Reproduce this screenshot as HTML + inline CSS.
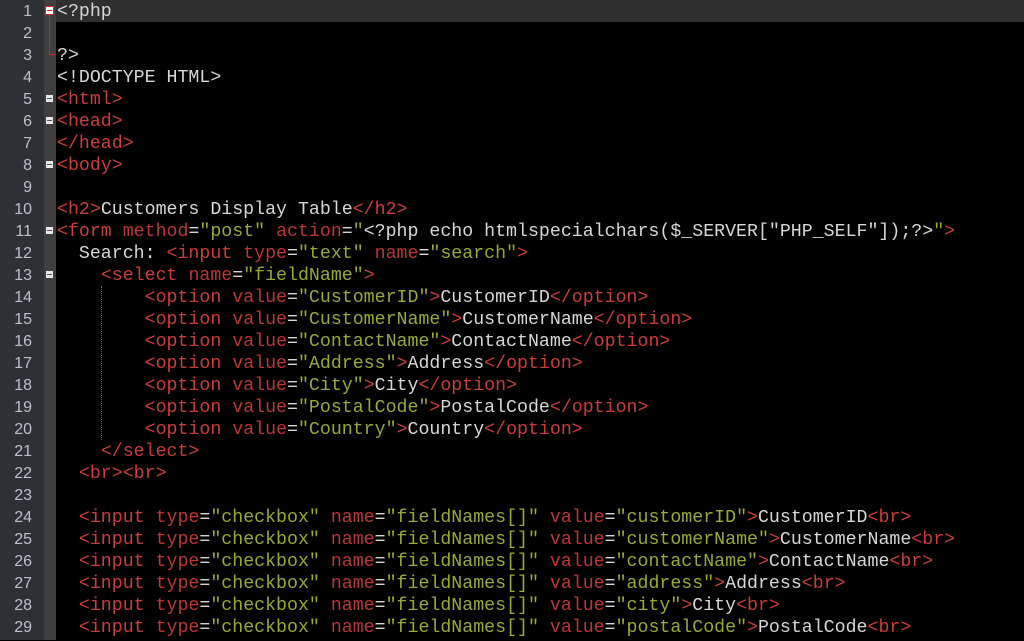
<!DOCTYPE html>
<html><head><meta charset="utf-8"><style>
html,body{margin:0;padding:0;width:1024px;height:640px;overflow:hidden;background:#000;}
#g{position:absolute;left:0;top:0;width:44px;height:640px;background:#2d3134;}
#f{position:absolute;left:44px;top:0;width:12px;height:640px;background-color:#3a3a3a;
background-image:linear-gradient(45deg,#444 25%,transparent 25%,transparent 75%,#444 75%),linear-gradient(45deg,#444 25%,transparent 25%,transparent 75%,#444 75%);
background-size:2px 2px;background-position:0 0,1px 1px;}
#hl{position:absolute;left:56px;top:0;width:968px;height:22px;background:#2f2f2f;}
.ln{position:absolute;left:0;width:32px;text-align:right;font:16px "Liberation Sans",sans-serif;color:#b8c2c8;height:22px;line-height:24px;}
.c{position:absolute;left:57px;height:22px;line-height:25px;font-family:"Liberation Mono",monospace;font-size:18.25px;color:#d6d6d6;white-space:pre;}
.t{color:#c83c3c}.a{color:#bb3535}.s{color:#98a834}.e{color:#d6d6d6}
.fb{position:absolute;left:46px;width:7px;height:7px;background:#e8e8e8;}
.fb:after{content:"";position:absolute;left:1px;top:3px;width:5px;height:1px;background:#555;}
.r{position:absolute;background:#e02020;z-index:5}
</style></head><body>
<div id="g"></div><div id="f"></div><div id="hl"></div>
<div style="position:absolute;z-index:6;left:45px;top:6px;width:9px;height:9px;border:1px solid #e02020;background:#fff;box-sizing:border-box"></div>
<div class="r" style="left:47px;top:10px;width:5px;height:1px;z-index:7"></div>
<div class="r" style="left:49px;top:15px;width:1px;height:40px"></div>
<div class="r" style="left:49px;top:54px;width:6px;height:1px"></div>
<div class="fb" style="top:95px"></div>
<div class="fb" style="top:117px"></div>
<div class="fb" style="top:161px"></div>
<div class="fb" style="top:227px"></div>
<div class="fb" style="top:271px"></div>
<div style="position:absolute;left:101px;top:286px;height:154px;border-left:1px dotted #666"></div>
<div class="ln" style="top:0">1</div><div class="ln" style="top:22px">2</div><div class="ln" style="top:44px">3</div><div class="ln" style="top:66px">4</div><div class="ln" style="top:88px">5</div><div class="ln" style="top:110px">6</div><div class="ln" style="top:132px">7</div><div class="ln" style="top:154px">8</div><div class="ln" style="top:176px">9</div><div class="ln" style="top:198px">10</div><div class="ln" style="top:220px">11</div><div class="ln" style="top:242px">12</div><div class="ln" style="top:264px">13</div><div class="ln" style="top:286px">14</div><div class="ln" style="top:308px">15</div><div class="ln" style="top:330px">16</div><div class="ln" style="top:352px">17</div><div class="ln" style="top:374px">18</div><div class="ln" style="top:396px">19</div><div class="ln" style="top:418px">20</div><div class="ln" style="top:440px">21</div><div class="ln" style="top:462px">22</div><div class="ln" style="top:484px">23</div><div class="ln" style="top:506px">24</div><div class="ln" style="top:528px">25</div><div class="ln" style="top:550px">26</div><div class="ln" style="top:572px">27</div><div class="ln" style="top:594px">28</div><div class="ln" style="top:616px">29</div>
<div class="c" style="top:0">&lt;?php</div>
<div class="c" style="top:44px">?&gt;</div>
<div class="c" style="top:66px">&lt;!DOCTYPE HTML&gt;</div>
<div class="c t" style="top:88px">&lt;html&gt;</div>
<div class="c t" style="top:110px">&lt;head&gt;</div>
<div class="c t" style="top:132px">&lt;/head&gt;</div>
<div class="c t" style="top:154px">&lt;body&gt;</div>
<div class="c" style="top:198px"><span class="t">&lt;h2&gt;</span>Customers Display Table<span class="t">&lt;/h2&gt;</span></div>
<div class="c" style="top:220px"><span class="t">&lt;form </span><span class="a">method</span>=<span class="s">"post"</span> <span class="a">action</span>=<span class="s">"</span>&lt;?php echo htmlspecialchars($_SERVER["PHP_SELF"]);?&gt;<span class="s">"</span><span class="t">&gt;</span></div>
<div class="c" style="top:242px">  Search: <span class="t">&lt;input </span><span class="a">type</span>=<span class="s">"text"</span> <span class="a">name</span>=<span class="s">"search"</span><span class="t">&gt;</span></div>
<div class="c" style="top:264px">    <span class="t">&lt;select </span><span class="a">name</span>=<span class="s">"fieldName"</span><span class="t">&gt;</span></div>
<div class="c" style="top:286px">        <span class="t">&lt;option </span><span class="a">value</span>=<span class="s">"CustomerID"</span><span class="t">&gt;</span>CustomerID<span class="t">&lt;/option&gt;</span></div>
<div class="c" style="top:308px">        <span class="t">&lt;option </span><span class="a">value</span>=<span class="s">"CustomerName"</span><span class="t">&gt;</span>CustomerName<span class="t">&lt;/option&gt;</span></div>
<div class="c" style="top:330px">        <span class="t">&lt;option </span><span class="a">value</span>=<span class="s">"ContactName"</span><span class="t">&gt;</span>ContactName<span class="t">&lt;/option&gt;</span></div>
<div class="c" style="top:352px">        <span class="t">&lt;option </span><span class="a">value</span>=<span class="s">"Address"</span><span class="t">&gt;</span>Address<span class="t">&lt;/option&gt;</span></div>
<div class="c" style="top:374px">        <span class="t">&lt;option </span><span class="a">value</span>=<span class="s">"City"</span><span class="t">&gt;</span>City<span class="t">&lt;/option&gt;</span></div>
<div class="c" style="top:396px">        <span class="t">&lt;option </span><span class="a">value</span>=<span class="s">"PostalCode"</span><span class="t">&gt;</span>PostalCode<span class="t">&lt;/option&gt;</span></div>
<div class="c" style="top:418px">        <span class="t">&lt;option </span><span class="a">value</span>=<span class="s">"Country"</span><span class="t">&gt;</span>Country<span class="t">&lt;/option&gt;</span></div>
<div class="c" style="top:440px">    <span class="t">&lt;/select&gt;</span></div>
<div class="c" style="top:462px">  <span class="t">&lt;br&gt;&lt;br&gt;</span></div>
<div class="c" style="top:506px">  <span class="t">&lt;input </span><span class="a">type</span>=<span class="s">"checkbox"</span> <span class="a">name</span>=<span class="s">"fieldNames[]"</span> <span class="a">value</span>=<span class="s">"customerID"</span><span class="t">&gt;</span>CustomerID<span class="t">&lt;br&gt;</span></div>
<div class="c" style="top:528px">  <span class="t">&lt;input </span><span class="a">type</span>=<span class="s">"checkbox"</span> <span class="a">name</span>=<span class="s">"fieldNames[]"</span> <span class="a">value</span>=<span class="s">"customerName"</span><span class="t">&gt;</span>CustomerName<span class="t">&lt;br&gt;</span></div>
<div class="c" style="top:550px">  <span class="t">&lt;input </span><span class="a">type</span>=<span class="s">"checkbox"</span> <span class="a">name</span>=<span class="s">"fieldNames[]"</span> <span class="a">value</span>=<span class="s">"contactName"</span><span class="t">&gt;</span>ContactName<span class="t">&lt;br&gt;</span></div>
<div class="c" style="top:572px">  <span class="t">&lt;input </span><span class="a">type</span>=<span class="s">"checkbox"</span> <span class="a">name</span>=<span class="s">"fieldNames[]"</span> <span class="a">value</span>=<span class="s">"address"</span><span class="t">&gt;</span>Address<span class="t">&lt;br&gt;</span></div>
<div class="c" style="top:594px">  <span class="t">&lt;input </span><span class="a">type</span>=<span class="s">"checkbox"</span> <span class="a">name</span>=<span class="s">"fieldNames[]"</span> <span class="a">value</span>=<span class="s">"city"</span><span class="t">&gt;</span>City<span class="t">&lt;br&gt;</span></div>
<div class="c" style="top:616px">  <span class="t">&lt;input </span><span class="a">type</span>=<span class="s">"checkbox"</span> <span class="a">name</span>=<span class="s">"fieldNames[]"</span> <span class="a">value</span>=<span class="s">"postalCode"</span><span class="t">&gt;</span>PostalCode<span class="t">&lt;br&gt;</span></div>
</body></html>
